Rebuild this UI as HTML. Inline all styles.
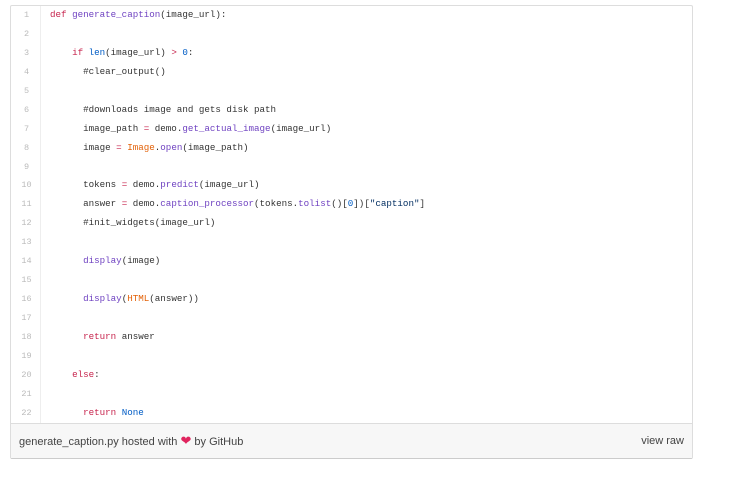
<!DOCTYPE html>
<html><head><style>
body{margin:0;background:#fff;width:756px;height:494px;overflow:hidden}
.box{position:absolute;left:10px;top:5px;width:681px;border:1px solid #ddd;border-bottom:1px solid #ccc;border-radius:2px;background:#fff}
.code{font-family:"Liberation Mono",monospace;font-size:9.2px;color:#333}
.row{height:18.95px;line-height:18.95px;display:flex}
.n{width:30px;border-right:1px solid #eee;text-align:center;color:#bbb;box-sizing:border-box;font-size:8.5px;padding-left:2px}
.c{padding-left:9px;white-space:pre}
.k{color:#c7254e}.f{color:#6f42c1}.b{color:#005cc5}.o{color:#e36209}.s{color:#032f62}
.foot{height:34px;background:#f7f7f7;border-top:1px solid #ddd;font-family:"Liberation Sans",sans-serif;font-size:11px;color:#444;line-height:34px;padding:0 8px;display:flex;justify-content:space-between}
</style></head><body>
<div class="box">
<div class="code">
<div class="row"><div class="n">1</div><div class="c"><span class="k">def</span> <span class="f">generate_caption</span>(image_url):</div></div>
<div class="row"><div class="n">2</div><div class="c"></div></div>
<div class="row"><div class="n">3</div><div class="c">    <span class="k">if</span> <span class="b">len</span>(image_url) <span class="k">&gt;</span> <span class="b">0</span>:</div></div>
<div class="row"><div class="n">4</div><div class="c">      #clear_output()</div></div>
<div class="row"><div class="n">5</div><div class="c"></div></div>
<div class="row"><div class="n">6</div><div class="c">      #downloads image and gets disk path</div></div>
<div class="row"><div class="n">7</div><div class="c">      image_path <span class="k">=</span> demo.<span class="f">get_actual_image</span>(image_url)</div></div>
<div class="row"><div class="n">8</div><div class="c">      image <span class="k">=</span> <span class="o">Image</span>.<span class="f">open</span>(image_path)</div></div>
<div class="row"><div class="n">9</div><div class="c"></div></div>
<div class="row"><div class="n">10</div><div class="c">      tokens <span class="k">=</span> demo.<span class="f">predict</span>(image_url)</div></div>
<div class="row"><div class="n">11</div><div class="c">      answer <span class="k">=</span> demo.<span class="f">caption_processor</span>(tokens.<span class="f">tolist</span>()[<span class="b">0</span>])[<span class="s">"caption"</span>]</div></div>
<div class="row"><div class="n">12</div><div class="c">      #init_widgets(image_url)</div></div>
<div class="row"><div class="n">13</div><div class="c"></div></div>
<div class="row"><div class="n">14</div><div class="c">      <span class="f">display</span>(image)</div></div>
<div class="row"><div class="n">15</div><div class="c"></div></div>
<div class="row"><div class="n">16</div><div class="c">      <span class="f">display</span>(<span class="o">HTML</span>(answer))</div></div>
<div class="row"><div class="n">17</div><div class="c"></div></div>
<div class="row"><div class="n">18</div><div class="c">      <span class="k">return</span> answer</div></div>
<div class="row"><div class="n">19</div><div class="c"></div></div>
<div class="row"><div class="n">20</div><div class="c">    <span class="k">else</span>:</div></div>
<div class="row"><div class="n">21</div><div class="c"></div></div>
<div class="row"><div class="n">22</div><div class="c">      <span class="k">return</span> <span class="b">None</span></div></div>
</div>
<div class="foot"><span>generate_caption.py hosted with <span style="color:#e0245e;font-size:13px">&#10084;</span> by GitHub</span><span>view raw</span></div>
</div>
</body></html>
